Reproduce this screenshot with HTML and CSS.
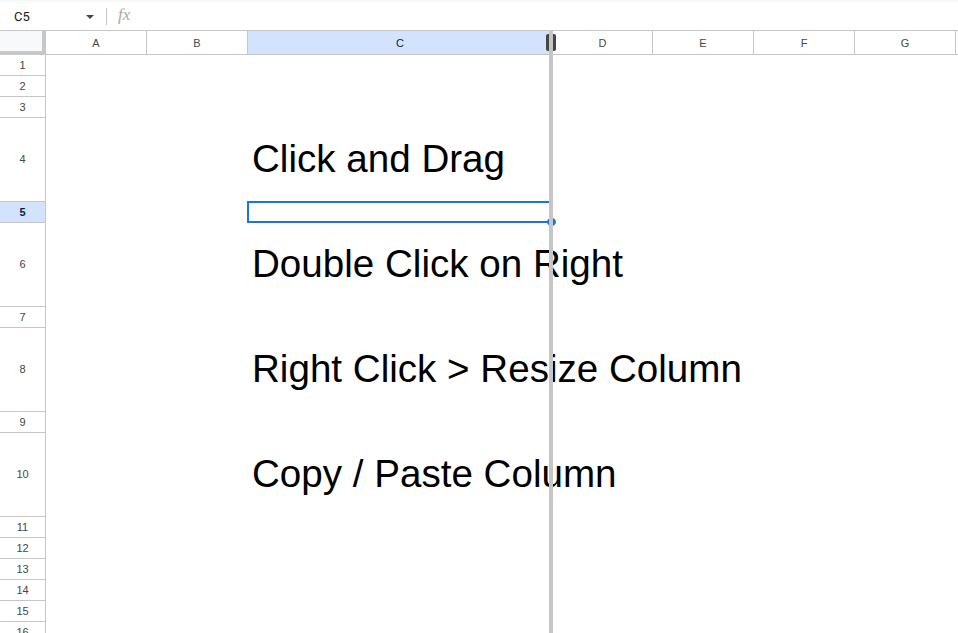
FILE: index.html
```html
<!DOCTYPE html>
<html>
<head>
<meta charset="utf-8">
<link rel="stylesheet" href="styles.css">
</head>
<body>
<div class="app">
  <div class="formula-bar">
    <div class="name-box">
      <span class="cell-ref">C5</span>
      <svg class="caret" width="8" height="4" viewBox="0 0 8 4"><path d="M0 0h8L4 4z" fill="#444746"/></svg>
    </div>
    <div class="sep"></div>
    <span class="fx">fx</span>
  </div>
  <div class="sheet">
    <div class="header-row">
      <div class="corner"></div>
      <div class="col-h">A</div>
      <div class="col-h">B</div>
      <div class="col-h col-c sel">C</div>
      <div class="col-h col-d">D</div>
      <div class="col-h">E</div>
      <div class="col-h">F</div>
      <div class="col-h">G</div>
      <div class="col-h col-rest"></div>
    </div>
    <div class="row"><div class="row-h">1</div><div class="cells"></div></div>
    <div class="row"><div class="row-h">2</div><div class="cells"></div></div>
    <div class="row"><div class="row-h">3</div><div class="cells"></div></div>
    <div class="row tall"><div class="row-h">4</div><div class="cells"><div class="text">Click and Drag</div></div></div>
    <div class="row"><div class="row-h sel">5</div><div class="cells"></div></div>
    <div class="row tall"><div class="row-h">6</div><div class="cells"><div class="text">Double Click on Right</div></div></div>
    <div class="row"><div class="row-h">7</div><div class="cells"></div></div>
    <div class="row tall"><div class="row-h">8</div><div class="cells"><div class="text">Right Click &gt; Resize Column</div></div></div>
    <div class="row"><div class="row-h">9</div><div class="cells"></div></div>
    <div class="row tall"><div class="row-h">10</div><div class="cells"><div class="text">Copy / Paste Column</div></div></div>
    <div class="row"><div class="row-h">11</div><div class="cells"></div></div>
    <div class="row"><div class="row-h">12</div><div class="cells"></div></div>
    <div class="row"><div class="row-h">13</div><div class="cells"></div></div>
    <div class="row"><div class="row-h">14</div><div class="cells"></div></div>
    <div class="row"><div class="row-h">15</div><div class="cells"></div></div>
    <div class="row"><div class="row-h">16</div><div class="cells"></div></div>

    <div class="selection"></div>
    <div class="fill-handle"></div>
    <div class="grip"></div>
    <div class="resize-bar"></div>
  </div>
</div>
</body>
</html>
```
FILE: styles.css
```css
html, body {
  margin: 0;
  padding: 0;
  background: #ffffff;
  overflow: hidden;
}
.app {
  width: 958px;
  height: 633px;
  overflow: hidden;
  font-family: "Liberation Sans", Arial, sans-serif;
}
.formula-bar {
  height: 28px;
  border-top: 2px solid #f8f9fa;
  display: flex;
  align-items: center;
  box-sizing: content-box;
}
.name-box {
  width: 106px;
  display: flex;
  align-items: center;
  padding-left: 14px;
  box-sizing: border-box;
}
.cell-ref {
  font-family: Roboto, "Liberation Sans", sans-serif;
  font-size: 13px;
  color: #202124;
  flex: 1;
}
.caret {
  margin-right: 12px;
  margin-top: 1px;
}
.sep {
  width: 1px;
  height: 17px;
  background: #c4c7c5;
}
.fx {
  margin-left: 11px;
  font-family: "Liberation Serif", serif;
  font-style: italic;
  font-size: 17px;
  color: #a8a8a8;
  margin-top: -2px;
}
.sheet {
  position: relative;
  border-top: 1px solid #c4c7c5;
}
.header-row {
  display: grid;
  grid-template-columns: 46px 101px 101px 305px 100px 101px 101px 101px 1fr;
  height: 24px;
}
.corner {
  background: #f8f9fa;
  border-right: 4px solid #c7c7c7;
  border-bottom: 4px solid #c7c7c7;
  box-sizing: border-box;
  width: 46px;
  box-shadow: 1px 0 0 #c4c7c5;
}
.col-h {
  border-right: 1px solid #c4c7c5;
  border-bottom: 1px solid #c4c7c5;
  display: flex;
  align-items: center;
  justify-content: center;
  font-size: 11px;
  color: #444746;
  background: #ffffff;
}
.col-h.sel {
  background: #d3e3fd;
  color: #0b1f44;
}
.col-h.col-rest {
  border-right: none;
}
.row {
  display: grid;
  grid-template-columns: 46px 1fr;
  height: 21px;
}
.row.tall {
  height: 84px;
}
.row-h {
  border-right: 1px solid #c4c7c5;
  border-bottom: 1px solid #c4c7c5;
  display: flex;
  align-items: center;
  justify-content: center;
  font-size: 11px;
  color: #444746;
  background: #ffffff;
  padding-bottom: 1px;
}
.row-h.sel {
  background: #d3e3fd;
  color: #041e49;
  font-weight: bold;
}
.cells {
  display: flex;
  align-items: center;
  padding-left: 206px;
}
.text {
  font-size: 38.6px;
  color: #000000;
  white-space: nowrap;
  line-height: 44px;
  margin-bottom: 2px;
}
.selection {
  position: absolute;
  left: 247px;
  top: 170px;
  width: 305px;
  height: 22px;
  border: 2px solid #1a73e8;
  box-sizing: border-box;
}
.fill-handle {
  position: absolute;
  left: 547px;
  top: 187px;
  width: 9px;
  height: 8px;
  border-radius: 50%;
  background: #1a73e8;
}
.grip {
  position: absolute;
  left: 546px;
  top: 3px;
  width: 10px;
  height: 17px;
  border-radius: 2px;
  background: #444746;
}
.resize-bar {
  position: absolute;
  left: 549px;
  top: 0;
  width: 4px;
  height: 610px;
  background: #c6c6c6;
}
```
